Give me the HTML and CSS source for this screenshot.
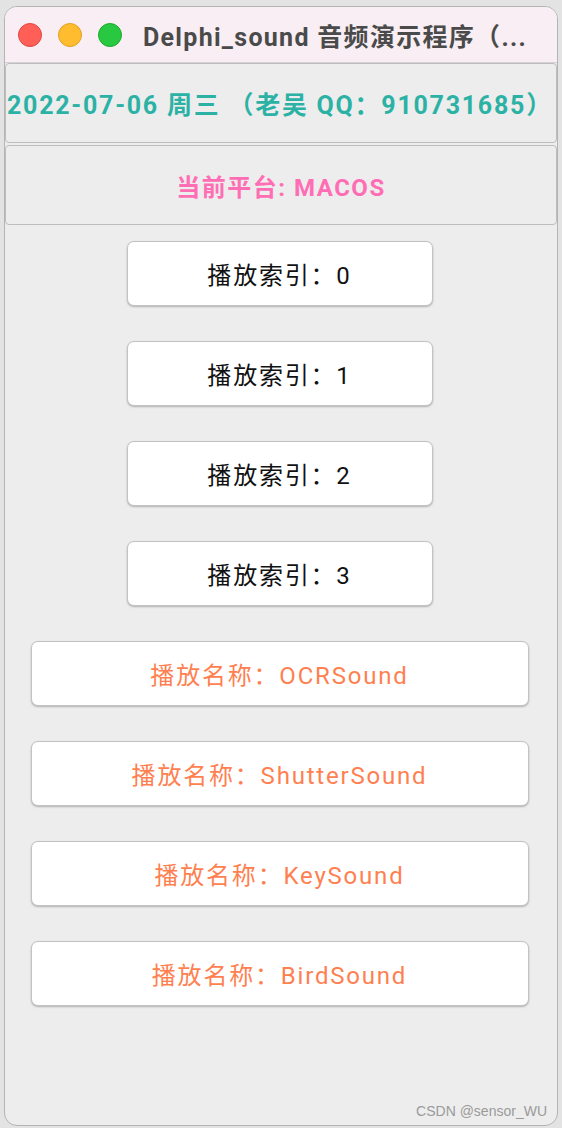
FILE: index.html
```html
<!DOCTYPE html>
<html>
<head>
    <title>Delphi_sound 音频演示程序</title>
    <link rel="stylesheet" href="styles.css">
</head>
<body>
    <div class="window">
        <div class="titlebar">
            <span class="dot red"></span>
            <span class="dot yellow"></span>
            <span class="dot green"></span>
            <span class="title">Delphi_sound 音频演示程序（...</span>
        </div>
        <div class="panel date">2022-07-06 周三 （老吴 QQ：910731685）</div>
        <div class="panel platform">当前平台: MACOS</div>

        <div class="buttons">
            <button class="btn small">播放索引：0</button>
            <button class="btn small">播放索引：1</button>
            <button class="btn small">播放索引：2</button>
            <button class="btn small">播放索引：3</button>
            <button class="btn wide">播放名称：OCRSound</button>
            <button class="btn wide">播放名称：ShutterSound</button>
            <button class="btn wide">播放名称：KeySound</button>
            <button class="btn wide">播放名称：BirdSound</button>
        </div>

        <div class="watermark">CSDN @sensor_WU</div>
    </div>
</body>
</html>
```

FILE: styles.css
```css
body {
    margin: 0;
    background: #e3e3e3;
    font-family: Roboto, "Noto Sans CJK SC", sans-serif;
}

.window {
    position: relative;
    box-sizing: border-box;
    height: 1120px;
    margin: 6px 4px 2px 4px;
    border: 1px solid #b4b4b4;
    border-radius: 13px;
    overflow: hidden;
    background: #ededed;
}

.titlebar {
    height: 56px;
    display: flex;
    align-items: center;
    padding-left: 13px;
    background: #f8eef3;
    border-bottom: 1px solid #d6d0d3;
    box-sizing: border-box;
}

.dot {
    width: 24px;
    height: 24px;
    border-radius: 50%;
    margin-right: 16px;
    box-sizing: border-box;
}

.red { background: #ff5f57; border: 1px solid #e2463f; }
.yellow { background: #febc2e; border: 1px solid #e1a024; }
.green { background: #28c840; border: 1px solid #1aab29; }

.title {
    margin-left: 5px;
    font-size: 25px;
    font-weight: bold;
    letter-spacing: 1.3px;
    color: #4a4a4a;
    white-space: nowrap;
}

.panel {
    box-sizing: border-box;
    height: 80px;
    margin-bottom: 2px;
    border: 1px solid #bdbdbd;
    border-radius: 4px;
    display: flex;
    align-items: center;
    justify-content: center;
    font-weight: bold;
    white-space: nowrap;
}

.date {
    color: #2cb2a5;
    font-size: 25px;
    letter-spacing: 1.75px;
    justify-content: flex-start;
    padding-left: 1px;
}

.platform {
    color: #ff6eb4;
    font-size: 24px;
    letter-spacing: 1.5px;
}

.buttons {
    display: flex;
    flex-direction: column;
    align-items: center;
    gap: 35px;
    padding-top: 14px;
    padding-right: 3px;
}

.btn {
    height: 65px;
    background: #ffffff;
    border: 1px solid #c2c2c2;
    border-radius: 7px;
    box-shadow: 0 1px 2px rgba(0,0,0,0.25);
    font-family: Roboto, "Noto Sans CJK SC", sans-serif;
    font-size: 24px;
    letter-spacing: 1.8px;
    padding: 0;
}

.small {
    width: 306px;
    color: #111111;
}

.wide {
    width: 498px;
    color: #ff7f50;
}

.watermark {
    position: absolute;
    right: 10px;
    bottom: 6px;
    font-family: "Liberation Sans", sans-serif;
    font-size: 14px;
    color: #9a9a9a;
}
```
